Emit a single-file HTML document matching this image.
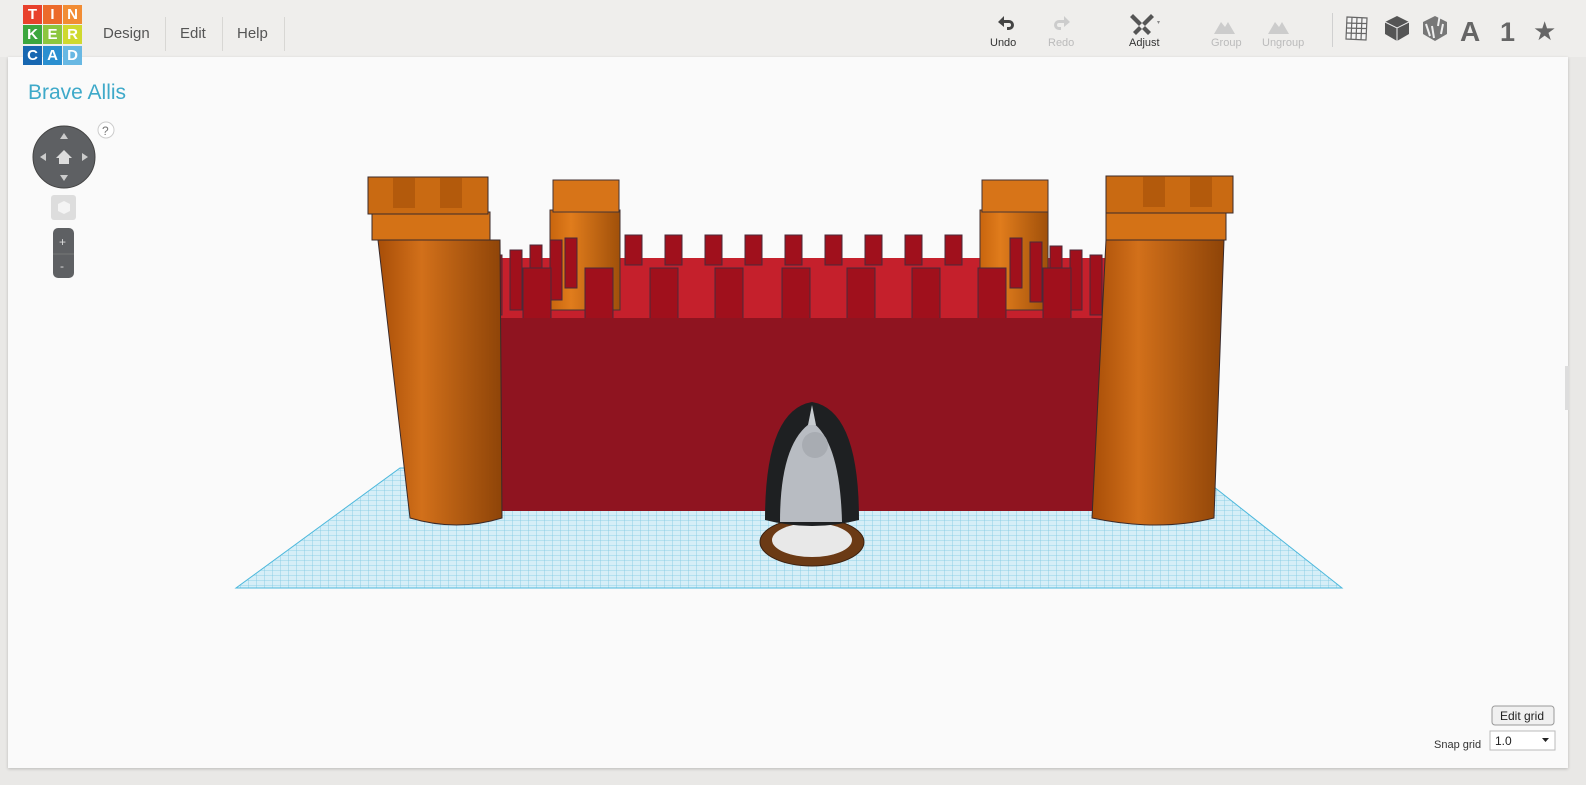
<!DOCTYPE html>
<html><head><meta charset="utf-8">
<style>
html,body{margin:0;padding:0;width:1586px;height:785px;overflow:hidden;background:#e9e8e6;font-family:"Liberation Sans",sans-serif}
.hdr{position:absolute;left:0;top:0;width:1586px;height:57px;background:#efeeec}
.canvas{position:absolute;left:8px;top:57px;width:1560px;height:711px;background:#fafafa;box-shadow:0 1px 3px rgba(0,0,0,.2)}
.logo{position:absolute;left:23px;top:5px;width:60px;height:60px;display:grid;grid-template-columns:repeat(3,19px);grid-gap:1px;z-index:5}
.logo div{width:19px;height:19px;color:#fff;font-weight:bold;font-size:15px;text-align:center;line-height:19px}
.menu{position:absolute;top:17px;height:34px;font-size:15px;color:#555;line-height:34px}
.sep{position:absolute;top:17px;width:1px;height:34px;background:#d8d7d4}
.tb{position:absolute;top:37px;font-size:11px;color:#333;text-align:center}
.title{position:absolute;left:28px;top:81px;font-size:21px;color:#3ea9c9}
</style></head><body>
<div class="hdr"></div>
<div class="menu" style="left:103px">Design</div><div class="sep" style="left:165px"></div>
<div class="menu" style="left:180px">Edit</div><div class="sep" style="left:222px"></div>
<div class="menu" style="left:237px">Help</div><div class="sep" style="left:284px"></div>
<svg style="position:absolute;left:0;top:0" width="1586" height="60">
<path d="M998 22 l6-6 v4 h5 a5 5 0 0 1 0 10 h-2 v-3 h2 a2 2 0 0 0 0-4 h-5 v4z" fill="#444"/>
<path d="M1070 22 l-6-6 v4 h-5 a5 5 0 0 0 0 10 h2 v-3 h-2 a2 2 0 0 1 0-4 h5 v4z" fill="#ccc"/>
<path d="M1133 14 l18 18 l-3 3 l-18-18z M1151 14 l-18 18 l3 3 l18-18z" fill="#555"/>
<path d="M1157 21 l3 0 l-1.5 3z" fill="#888"/>
<path d="M1214 34 l7-12 l4 5 l3-5 l7 12z" fill="#ccc"/>
<path d="M1268 34 l7-12 l4 5 l3-5 l7 12z" fill="#ccc"/>
<rect x="1332" y="13" width="1" height="34" fill="#d0d0d0"/>
<g stroke="#666" fill="#f4f4f4" stroke-width="1.2"><path d="M1347 17 l20 1 l-1 22 l-20-1z"/><path d="M1352 17.5 l-1 22 M1357 17.5 l-1 22 M1362 17.8 l-1 22 M1346.5 23 l20 .5 M1346.3 28 l20 .5 M1346 33 l20 .5" fill="none"/></g>
<path d="M1385 22 l12-6 l12 6 v12 l-12 7 l-12-7z" fill="#555"/><path d="M1385 22 l12 6 l12-6 M1397 28 v13" stroke="#eee" fill="none"/>
<path d="M1423 22 l12-6 l12 6 v12 l-12 7 l-12-7z" fill="#777"/><path d="M1426 24 l4 12 M1432 26 l2 12 M1438 26 l2-12 M1443 24 l-2 10" stroke="#eee" stroke-width="2"/>
<text x="1460" y="41" font-size="28" font-weight="bold" fill="#666" font-family="Liberation Sans">A</text>
<text x="1500" y="41" font-size="27" font-weight="bold" fill="#666" font-family="Liberation Sans">1</text>
<text x="1533" y="40" font-size="26" fill="#666" font-family="DejaVu Sans">★</text>
</svg>
<div class="tb" style="left:990px">Undo</div>
<div class="tb" style="left:1048px;color:#bbb">Redo</div>
<div class="tb" style="left:1129px">Adjust</div>
<div class="tb" style="left:1211px;color:#bbb">Group</div>
<div class="tb" style="left:1262px;color:#bbb">Ungroup</div>
<div class="canvas"></div>
<div class="logo">
<div style="background:#e8412c">T</div><div style="background:#ec6a2b">I</div><div style="background:#f28c34">N</div>
<div style="background:#3ca63e">K</div><div style="background:#8cc63f">E</div><div style="background:#cfd92f">R</div>
<div style="background:#1767b1">C</div><div style="background:#2a8fd0">A</div><div style="background:#68b8e3">D</div>
</div>
<div class="title">Brave Allis</div>
<svg style="position:absolute;left:0;top:0" width="1586" height="785">
<defs>
<pattern id="g" width="8" height="5" patternUnits="userSpaceOnUse"><rect width="8" height="5" fill="#d6eef7"/><path d="M0 0H8M0 0V5" stroke="#7cc8e2" stroke-width=".8"/></pattern>
<linearGradient id="tw" x1="0" x2="1"><stop offset="0" stop-color="#a84e08"/><stop offset=".35" stop-color="#d2701a"/><stop offset="1" stop-color="#8e4408"/></linearGradient>
<linearGradient id="tw2" x1="0" x2="1"><stop offset="0" stop-color="#c8650e"/><stop offset=".3" stop-color="#e07c1c"/><stop offset="1" stop-color="#a0500a"/></linearGradient>
</defs>
<circle cx="106" cy="130" r="8" fill="#fff" stroke="#ccc"/><text x="102" y="135" font-size="12" fill="#777">?</text>
<circle cx="64" cy="157" r="31" fill="#5e6063" stroke="#444"/>
<path d="M64 133 l4 6 h-8z M64 181 l4-6 h-8z M40 157 l6-4 v8z M88 157 l-6-4 v8z" fill="#ccc"/>
<path d="M56 158 l8-8 l8 8 h-3 v6 h-10 v-6z" fill="#ddd"/>
<rect x="51" y="195" width="25" height="25" rx="3" fill="#ddd"/><path d="M58 204 l6-3 l6 3 v7 l-6 3 l-6-3z" fill="#f4f4f4"/>
<rect x="53" y="228" width="21" height="50" rx="5" fill="#5e6063"/><line x1="53" y1="254" x2="74" y2="254" stroke="#777"/>
<text x="59" y="246" font-size="12" fill="#ddd">+</text><text x="60" y="270" font-size="12" fill="#ddd">-</text>
<polygon points="400,468 1190,468 1342,588 236,588" fill="url(#g)" stroke="#4cb8dc"/>
<polygon points="600,300 1000,300 1100,318 487,318" fill="#b8141f"/>
<rect x="487" y="258" width="622" height="62" fill="#c5202c"/>
<rect x="550" y="210" width="70" height="100" fill="url(#tw2)" stroke="#433"/>
<rect x="553" y="180" width="66" height="32" fill="#d77418" stroke="#433"/>
<rect x="980" y="210" width="68" height="100" fill="url(#tw2)" stroke="#433"/>
<rect x="982" y="180" width="66" height="32" fill="#d77418" stroke="#433"/>
<g fill="#a0101c" stroke="#4a2a3a" stroke-width="1">
<rect x="625" y="235" width="17" height="30"/><rect x="665" y="235" width="17" height="30"/><rect x="705" y="235" width="17" height="30"/><rect x="745" y="235" width="17" height="30"/><rect x="785" y="235" width="17" height="30"/><rect x="825" y="235" width="17" height="30"/><rect x="865" y="235" width="17" height="30"/><rect x="905" y="235" width="17" height="30"/><rect x="945" y="235" width="17" height="30"/>
<rect x="490" y="255" width="12" height="60"/><rect x="510" y="250" width="12" height="60"/><rect x="530" y="245" width="12" height="60"/><rect x="550" y="240" width="12" height="60"/><rect x="565" y="238" width="12" height="50"/>
<rect x="1010" y="238" width="12" height="50"/><rect x="1030" y="242" width="12" height="60"/><rect x="1050" y="246" width="12" height="60"/><rect x="1070" y="250" width="12" height="60"/><rect x="1090" y="255" width="12" height="60"/>
<rect x="523" y="268" width="28" height="52"/><rect x="585" y="268" width="28" height="52"/><rect x="650" y="268" width="28" height="52"/><rect x="715" y="268" width="28" height="52"/><rect x="782" y="268" width="28" height="52"/><rect x="847" y="268" width="28" height="52"/><rect x="912" y="268" width="28" height="52"/><rect x="978" y="268" width="28" height="52"/><rect x="1043" y="268" width="28" height="52"/>
</g>
<rect x="487" y="318" width="622" height="193" fill="#8f1420"/>
<path d="M378 240 h122 l2 278 q-45 14 -92 0z" fill="url(#tw)" stroke="#3a2a2a"/>
<path d="M372 212 h118 v28 h-118z" fill="#d47216" stroke="#3a2a2a"/>
<path d="M368 177 h120 v37 h-120z" fill="#c96a12" stroke="#3a2a2a"/>
<rect x="393" y="178" width="22" height="30" fill="#b35a0c"/><rect x="440" y="178" width="22" height="30" fill="#b35a0c"/>
<path d="M1106 240 h118 l-10 278 q-55 14 -122 0z" fill="url(#tw)" stroke="#3a2a2a"/>
<path d="M1106 212 h120 v28 h-120z" fill="#d47216" stroke="#3a2a2a"/>
<path d="M1106 176 h127 v37 h-127z" fill="#c96a12" stroke="#3a2a2a"/>
<rect x="1143" y="177" width="22" height="30" fill="#b35a0c"/><rect x="1190" y="177" width="22" height="30" fill="#b35a0c"/>
<ellipse cx="812" cy="542" rx="52" ry="24" fill="#6b3a15" stroke="#3a2010"/>
<ellipse cx="812" cy="540" rx="40" ry="17" fill="#e8e8e8"/>
<path d="M765 520 q0-110 47-118 q47 8 47 118 q-47 12 -94 0z" fill="#1e2022"/>
<path d="M780 522 q0-80 32-100 q28 20 30 100z" fill="#b8bcc2"/><circle cx="815" cy="445" r="13" fill="#a8acb2"/>
<path d="M812 405 l4 20 h-8z" fill="#c8ccd0"/>
<rect x="1492" y="706" width="62" height="19" rx="3" fill="#f0f0f0" stroke="#999"/>
<text x="1500" y="720" font-size="12" fill="#222">Edit grid</text>
<text x="1434" y="748" font-size="11" fill="#333">Snap grid</text>
<rect x="1490" y="731" width="65" height="19" fill="#fff" stroke="#bbb"/>
<text x="1495" y="745" font-size="12" fill="#222">1.0</text><path d="M1542 738 h7 l-3.5 4z" fill="#222"/>
<rect x="1565" y="366" width="4" height="44" fill="#ddd"/>
</svg>
</body></html>
